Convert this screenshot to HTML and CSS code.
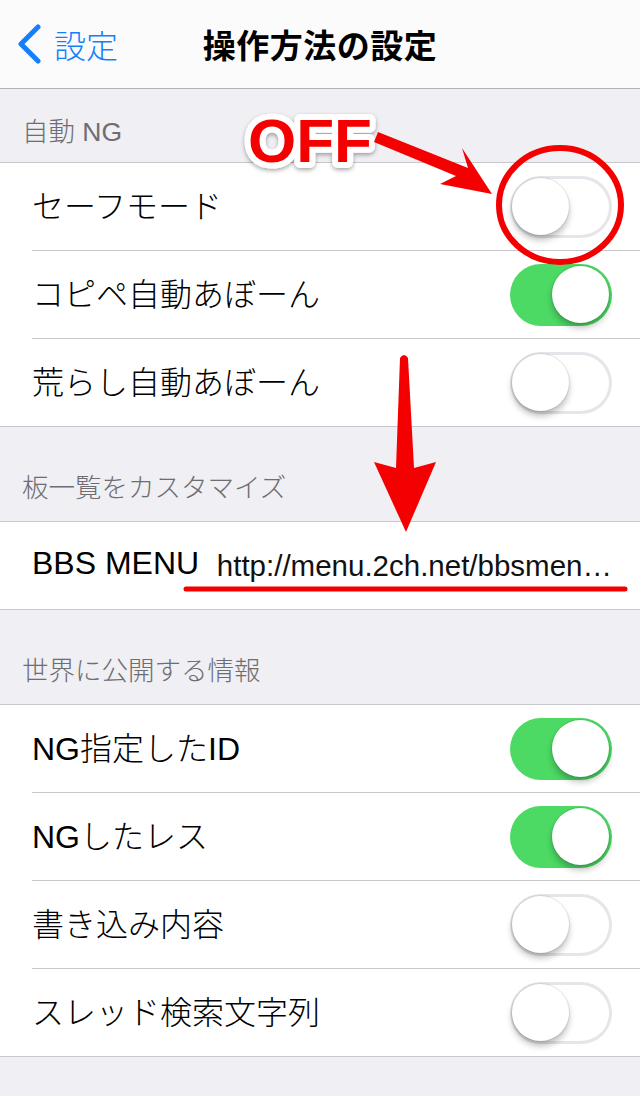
FILE: index.html
```html
<!DOCTYPE html>
<html lang="ja">
<head>
<meta charset="utf-8">
<title>操作方法の設定</title>
<link rel="stylesheet" href="styles.css">
</head>
<body>
<div class="screen">
  <header class="nav">
    <a class="back">
      <svg class="chevron" viewBox="0 0 26 40" width="26" height="40"><path d="M22 3 L5 20 L22 37" fill="none" stroke="#157efb" stroke-width="5" stroke-linecap="round" stroke-linejoin="round"/></svg>
      <span>設定</span>
    </a>
    <h1 class="title">操作方法の設定</h1>
    <span></span>
  </header>

  <div class="section-head first">自動 NG</div>
  <div class="group">
    <div class="row"><div class="cell"><span class="label">セーフモード</span><span class="switch"></span></div></div>
    <div class="row"><div class="cell"><span class="label">コピペ自動あぼーん</span><span class="switch on"></span></div></div>
    <div class="row"><div class="cell"><span class="label">荒らし自動あぼーん</span><span class="switch"></span></div></div>
  </div>

  <div class="section-head">板一覧をカスタマイズ</div>
  <div class="group">
    <div class="row"><div class="cell"><span class="label">BBS MENU</span><span class="detail">http://menu.2ch.net/bbsmen…</span></div></div>
  </div>

  <div class="section-head">世界に公開する情報</div>
  <div class="group">
    <div class="row"><div class="cell"><span class="label">NG指定したID</span><span class="switch on"></span></div></div>
    <div class="row"><div class="cell"><span class="label">NGしたレス</span><span class="switch on"></span></div></div>
    <div class="row"><div class="cell"><span class="label">書き込み内容</span><span class="switch"></span></div></div>
    <div class="row"><div class="cell"><span class="label">スレッド検索文字列</span><span class="switch"></span></div></div>
  </div>

  <svg class="marks" viewBox="0 0 640 1096" width="640" height="1096">
    <defs>
      <filter id="soft" x="-10%" y="-10%" width="120%" height="120%">
        <feDropShadow dx="0" dy="2" stdDeviation="2" flood-color="#000" flood-opacity="0.35"/>
      </filter>
    </defs>
    <!-- callout label -->
    <text x="310" y="162" class="off-label off-outline" text-anchor="middle">OFF</text>
    <text x="310" y="162" class="off-label" text-anchor="middle">OFF</text>
    <!-- pointer toward the first switch -->
    <path d="M378 132 L468 168 L462 148 L492 194 L440 184 L456 176 L374 142 Z" fill="#f50000"/>
    <!-- ring around the switch -->
    <ellipse cx="560" cy="205" rx="61" ry="57" fill="none" stroke="#f50000" stroke-width="6"/>
    <!-- downward pointer -->
    <path d="M400 358 Q404 352 408 358 L414 468 L436 462 L406 532 L374 462 L396 468 Z" fill="#f50000"/>
    <!-- underline of the address -->
    <line x1="186" y1="589" x2="625" y2="589" stroke="#f50000" stroke-width="5" stroke-linecap="round"/>
  </svg>
</div>
</body>
</html>
```
FILE: styles.css
```css
html, body {
  margin: 0;
  padding: 0;
}

body {
  background: #efeff4;
  font-family: "Liberation Sans", "Noto Sans CJK JP", sans-serif;
  color: #000;
}

.screen {
  position: relative;
  width: 640px;
  height: 1096px;
  overflow: hidden;
  background: #efeff4;
}

.nav {
  height: 88px;
  background: #fbfbfb;
  border-bottom: 1px solid #b2b2b2;
  display: grid;
  grid-template-columns: 1fr auto 1fr;
  align-items: center;
}

.back {
  display: flex;
  align-items: center;
  gap: 12px;
  padding-left: 16px;
  color: #157efb;
  font-size: 32px;
  font-weight: 300;
}

.chevron {
  display: block;
}

.title {
  margin: 0;
  font-size: 33px;
  font-weight: 700;
  letter-spacing: 0.5px;
}

.section-head {
  height: 94px;
  box-sizing: border-box;
  display: flex;
  align-items: flex-end;
  padding: 0 0 16px 22px;
  font-size: 26.5px;
  font-weight: 300;
  color: #6d6d72;
}

.section-head.first {
  height: 73px;
  padding-bottom: 13px;
}

.group {
  background: #fff;
  border-top: 1px solid #c8c7cc;
  border-bottom: 1px solid #c8c7cc;
}

.row {
  padding-left: 32px;
}

.cell {
  height: 88px;
  box-sizing: border-box;
  display: flex;
  align-items: center;
  justify-content: space-between;
  padding-right: 28px;
  border-bottom: 1px solid #c8c7cc;
}

.row:last-child .cell {
  height: 87px;
  border-bottom: none;
}

.label {
  font-size: 32px;
  font-weight: 300;
  padding-bottom: 5px;
}

.detail {
  font-size: 29.5px;
  color: #111;
}

.switch {
  position: relative;
  width: 102px;
  height: 62px;
  box-sizing: border-box;
  border-radius: 31px;
  background: #fff;
  box-shadow: inset 0 0 0 3px #e5e5ea;
  flex: none;
}

.switch::after {
  content: "";
  position: absolute;
  top: 2px;
  left: 2px;
  width: 57px;
  height: 57px;
  border-radius: 50%;
  background: #fff;
  box-shadow: 0 0 0 1px rgba(0, 0, 0, 0.08), 0 5px 6px rgba(0, 0, 0, 0.25);
}

.switch.on {
  background: #4cd964;
  box-shadow: none;
}

.switch.on::after {
  left: 42px;
}

.marks {
  position: absolute;
  top: 0;
  left: 0;
  pointer-events: none;
}

.off-label {
  font-family: "Liberation Sans", sans-serif;
  font-weight: 700;
  font-size: 62px;
  fill: #f50000;
}

.off-outline {
  stroke: #fff;
  stroke-width: 12px;
  stroke-linejoin: round;
  filter: url(#soft);
}
```
